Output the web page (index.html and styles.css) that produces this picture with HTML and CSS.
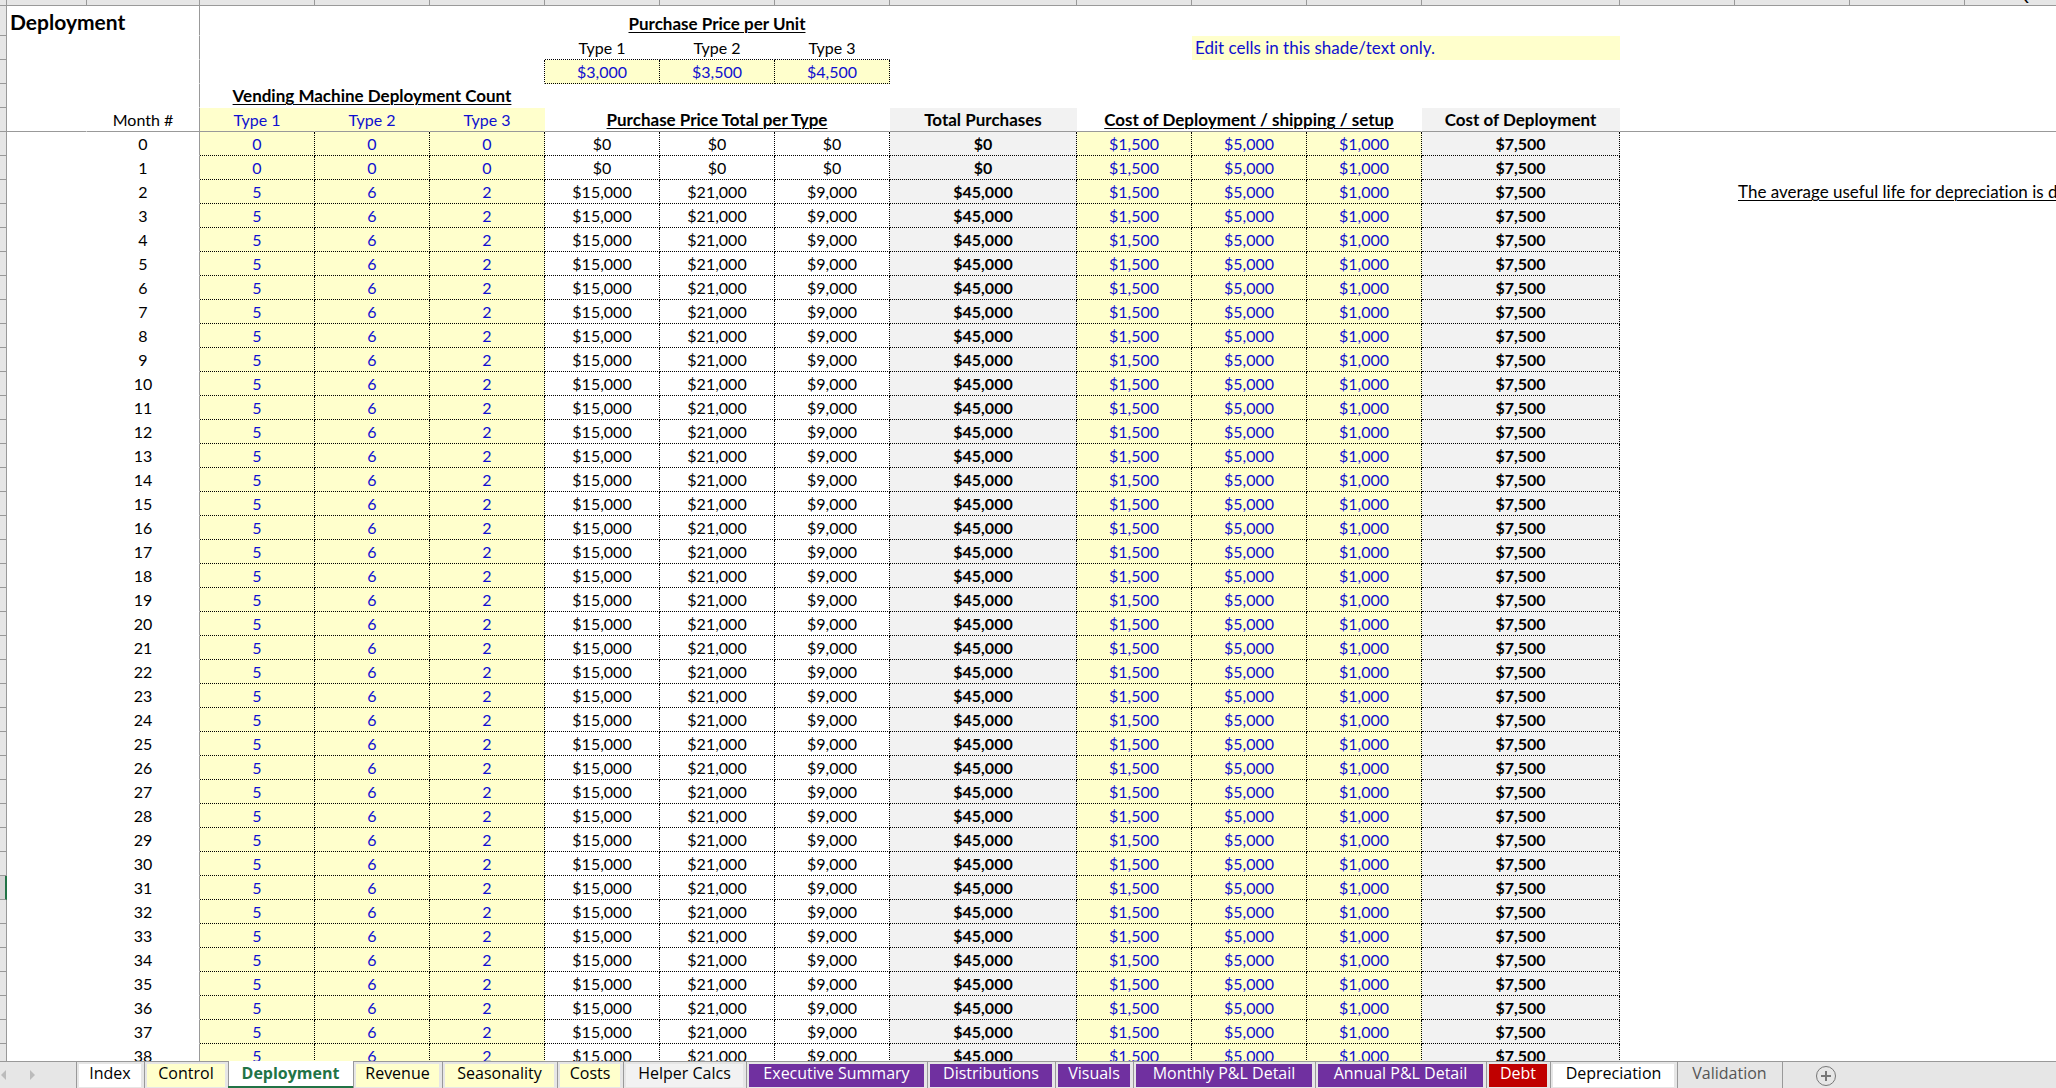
FILE: index.html
```html
<!DOCTYPE html>
<html lang="en">
<head>
<meta charset="utf-8">
<title>Deployment</title>
<link rel="stylesheet" href="styles.css">
</head>
<body>
<main class="sheet">
  <table class="grid">
    <colgroup>
      <col class="w-rowhead"><col class="w-a"><col class="w-b">
      <col class="w-std" span="6">
      <col class="w-total">
      <col class="w-std" span="3">
      <col class="w-cost">
      <col class="w-std" span="3"><col>
    </colgroup>
    <thead>
      <tr class="letters">
        <th></th><th></th><th></th><th></th><th></th><th></th><th></th><th></th><th></th><th></th><th></th><th></th><th></th><th></th><th></th><th></th><th></th><th><div class="letter"><span>Q</span></div></th>
      </tr>
      <tr class="title-row">
        <th class="rh"></th>
        <th colspan="2" class="title freeze-right">Deployment</th>
        <td colspan="3"></td>
        <th colspan="3" class="group">Purchase Price per Unit</th>
        <td colspan="9"></td>
      </tr>
      <tr>
        <th class="rh"></th>
        <td colspan="2" class="freeze-right"></td>
        <td colspan="2"></td><td></td>
        <td class="line-bottom">Type 1</td><td class="line-bottom">Type 2</td><td class="line-bottom">Type 3</td>
        <td colspan="2"></td>
        <td colspan="3" class="edit legend">Edit cells in this shade/text only.</td>
        <td colspan="4"></td>
      </tr>
      <tr>
        <th class="rh"></th>
        <td colspan="2" class="freeze-right"></td>
        <td colspan="2"></td><td class="line-right"></td>
        <td class="edit line">$3,000</td><td class="edit line">$3,500</td><td class="edit line">$4,500</td>
        <td colspan="9"></td>
      </tr>
      <tr>
        <th class="rh"></th>
        <td colspan="2" class="freeze-right"></td>
        <th colspan="3" class="group">Vending Machine Deployment Count</th>
        <td colspan="12"></td>
      </tr>
      <tr class="labels">
        <th class="rh"></th>
        <td></td><td class="freeze-right">Month #</td>
        <td class="edit">Type 1</td><td class="edit">Type 2</td><td class="edit">Type 3</td>
        <th colspan="3" class="group">Purchase Price Total per Type</th>
        <th class="sum">Total Purchases</th>
        <th colspan="3" class="group">Cost of Deployment / shipping / setup</th>
        <th class="sum">Cost of Deployment</th>
        <td colspan="4"></td>
      </tr>
    </thead>
    <tbody id="months"></tbody>
  </table>
</main>
<nav class="tabbar" aria-label="Sheets">
  <div class="scroll">
    <button aria-label="Previous sheets"><svg width="5" height="10" viewBox="0 0 5 10"><path d="M5 0v10L0 5z"/></svg></button>
    <button aria-label="Next sheets"><svg width="5" height="10" viewBox="0 0 5 10"><path d="M0 0v10l5-5z"/></svg></button>
  </div>
  <div class="tabs">
    <button class="tab"><span class="white">Index</span></button>
    <button class="tab"><span class="yellow">Control</span></button>
    <button class="tab active" aria-current="page"><span>Deployment</span></button>
    <button class="tab"><span class="yellow">Revenue</span></button>
    <button class="tab"><span class="yellow">Seasonality</span></button>
    <button class="tab"><span class="yellow">Costs</span></button>
    <button class="tab"><span class="light">Helper Calcs</span></button>
    <button class="tab"><span class="purple">Executive Summary</span></button>
    <button class="tab"><span class="purple">Distributions</span></button>
    <button class="tab"><span class="purple">Visuals</span></button>
    <button class="tab"><span class="purple">Monthly P&amp;L Detail</span></button>
    <button class="tab"><span class="purple">Annual P&amp;L Detail</span></button>
    <button class="tab"><span class="red">Debt</span></button>
    <button class="tab"><span class="white">Depreciation</span></button>
    <button class="tab last"><span class="plain">Validation</span></button>
  </div>
  <button class="add" aria-label="New sheet">
    <svg width="22" height="22" viewBox="0 0 22 22" fill="none" stroke="#777"><circle cx="11" cy="11" r="9.5"/><path d="M11 6v10M6 11h10" stroke-width="2"/></svg>
  </button>
</nav>
<script src="months.js"></script>
</body>
</html>
```

FILE: styles.css
```css
* { box-sizing: border-box; }

body {
  margin: 0;
  height: 100vh;
  display: flex;
  flex-direction: column;
  overflow: hidden;
  background: #fff;
  color: #000;
  font-family: Lato, "Liberation Sans", sans-serif;
  font-size: 16px;
  font-variant-ligatures: none;
}

.sheet { flex: 1; min-height: 0; overflow: hidden; }

.grid {
  width: 100%;
  min-width: 2080px;
  table-layout: fixed;
  border-collapse: separate;
  border-spacing: 0;
}

.w-rowhead { width: 7px; }
.w-a { width: 80px; }
.w-b { width: 113px; }
.w-std { width: 115px; }
.w-total { width: 187px; }
.w-cost { width: 198px; }

.grid th, .grid td {
  height: 24px;
  padding: 0;
  border: 0 solid transparent;
  border-width: 0 1px 1px 0;
  line-height: 23px;
  text-align: center;
  vertical-align: bottom;
  white-space: nowrap;
}
.grid th { font-size: 17px; }

.grid .letters th {
  height: 6px;
  background: #e6e6e6;
  border-color: #999;
  line-height: 5px;
}
.letter { height: 5px; overflow: hidden; display: flex; align-items: flex-end; justify-content: center; }
.letter span { line-height: 23px; font-weight: normal; }

.grid .rh { background: #e6e6e6; border-color: #999; }
.grid .rh.selected { background: #d2d2d2; border-right: 2px solid #217346; }

.grid .title-row > * { height: 30px; }
.grid .title { padding: 0 0 2px 3px; font-size: 21px; text-align: left; }
.grid .group { text-decoration: underline; text-underline-offset: 2px; text-decoration-thickness: 1px; }

.grid .freeze-right { border-right-color: #999; }
.grid .labels > * { border-bottom-color: #999; }

.grid .edit { background: #ffffcc; color: #0f0fd0; }
.grid .sum { background: #f2f2f2; font-weight: bold; }
.grid .legend { padding-left: 3px; font-size: 17px; text-align: left; }

.grid .line { border-style: dotted; border-color: #000; }
.grid .line-bottom { border-bottom: 1px dotted #000; }
.grid .line-right { border-right: 1px dotted #000; }
.grid .note { padding-left: 3px; font-size: 17px; text-align: left; text-decoration: underline; text-underline-offset: 2px; text-decoration-thickness: 1px; }

button { margin: 0; padding: 0; border: 0; background: none; font: inherit; color: inherit; }

.tabbar {
  flex: none;
  display: flex;
  height: 27px;
  background: #e6e6e6;
  font-family: "Open Sans", "Noto Sans", sans-serif;
  box-shadow: inset 0 1px #999;
}
.scroll { width: 76px; display: flex; align-items: center; gap: 24px; padding-left: 1px; }
.scroll button { display: flex; }
.scroll svg { fill: #bbb; }

.tabs {
  display: grid;
  grid-template-columns: 68px 84px 125px 89px 115px 66px 123px 181px 128px 78px 182px 171px 64px 127px 106px;
}
.tab { display: flex; padding: 3px 3px 1px; box-shadow: inset 1px 0 #999; }
.tab span { flex: 1; height: 23px; line-height: 18px; text-align: center; white-space: nowrap; }
.tab.active {
  padding: 3px 0 0;
  background: #fff;
  border-bottom: 2px solid #217346;
  color: #217346;
  font-weight: bold;
}
.tab.active span { height: 20px; }
.tab.last { border-right: 1px solid #999; }
.white { background: #fff; }
.yellow { background: #ffffcc; }
.light { background: #f2f2f2; }
.purple { background: #7030a0; color: #fff; }
.red { background: #c00000; color: #fff; }
.plain { color: #555; }

.add { display: flex; align-items: center; margin-left: 32px; padding-top: 3px; }
```

FILE: months.js
```js
const SELECTED_MONTH = 31;
const LAST_MONTH = 38;
const body = document.getElementById('months');

const cell = (text, classes) => `<td class="${classes}">${text}</td>`;

for (let month = 0; month <= LAST_MONTH; month++) {
  const started = month >= 2;
  const counts = started ? [5, 6, 2] : [0, 0, 0];
  const prices = started ? ['$15,000', '$21,000', '$9,000'] : ['$0', '$0', '$0'];
  const note = month === 2
    ? '<td></td><td colspan="3" class="note">The average useful life for depreciation is determined</td>'
    : '<td colspan="4"></td>';

  body.insertAdjacentHTML('beforeend', `<tr>
    <th class="rh${month === SELECTED_MONTH ? ' selected' : ''}"></th>
    <td></td>${cell(month, 'freeze-right')}
    ${counts.map(n => cell(n, 'edit line')).join('')}
    ${prices.map(p => cell(p, 'line')).join('')}
    ${cell(started ? '$45,000' : '$0', 'sum line')}
    ${['$1,500', '$5,000', '$1,000'].map(c => cell(c, 'edit line')).join('')}
    ${cell('$7,500', 'sum line')}
    ${note}</tr>`);
}
```
